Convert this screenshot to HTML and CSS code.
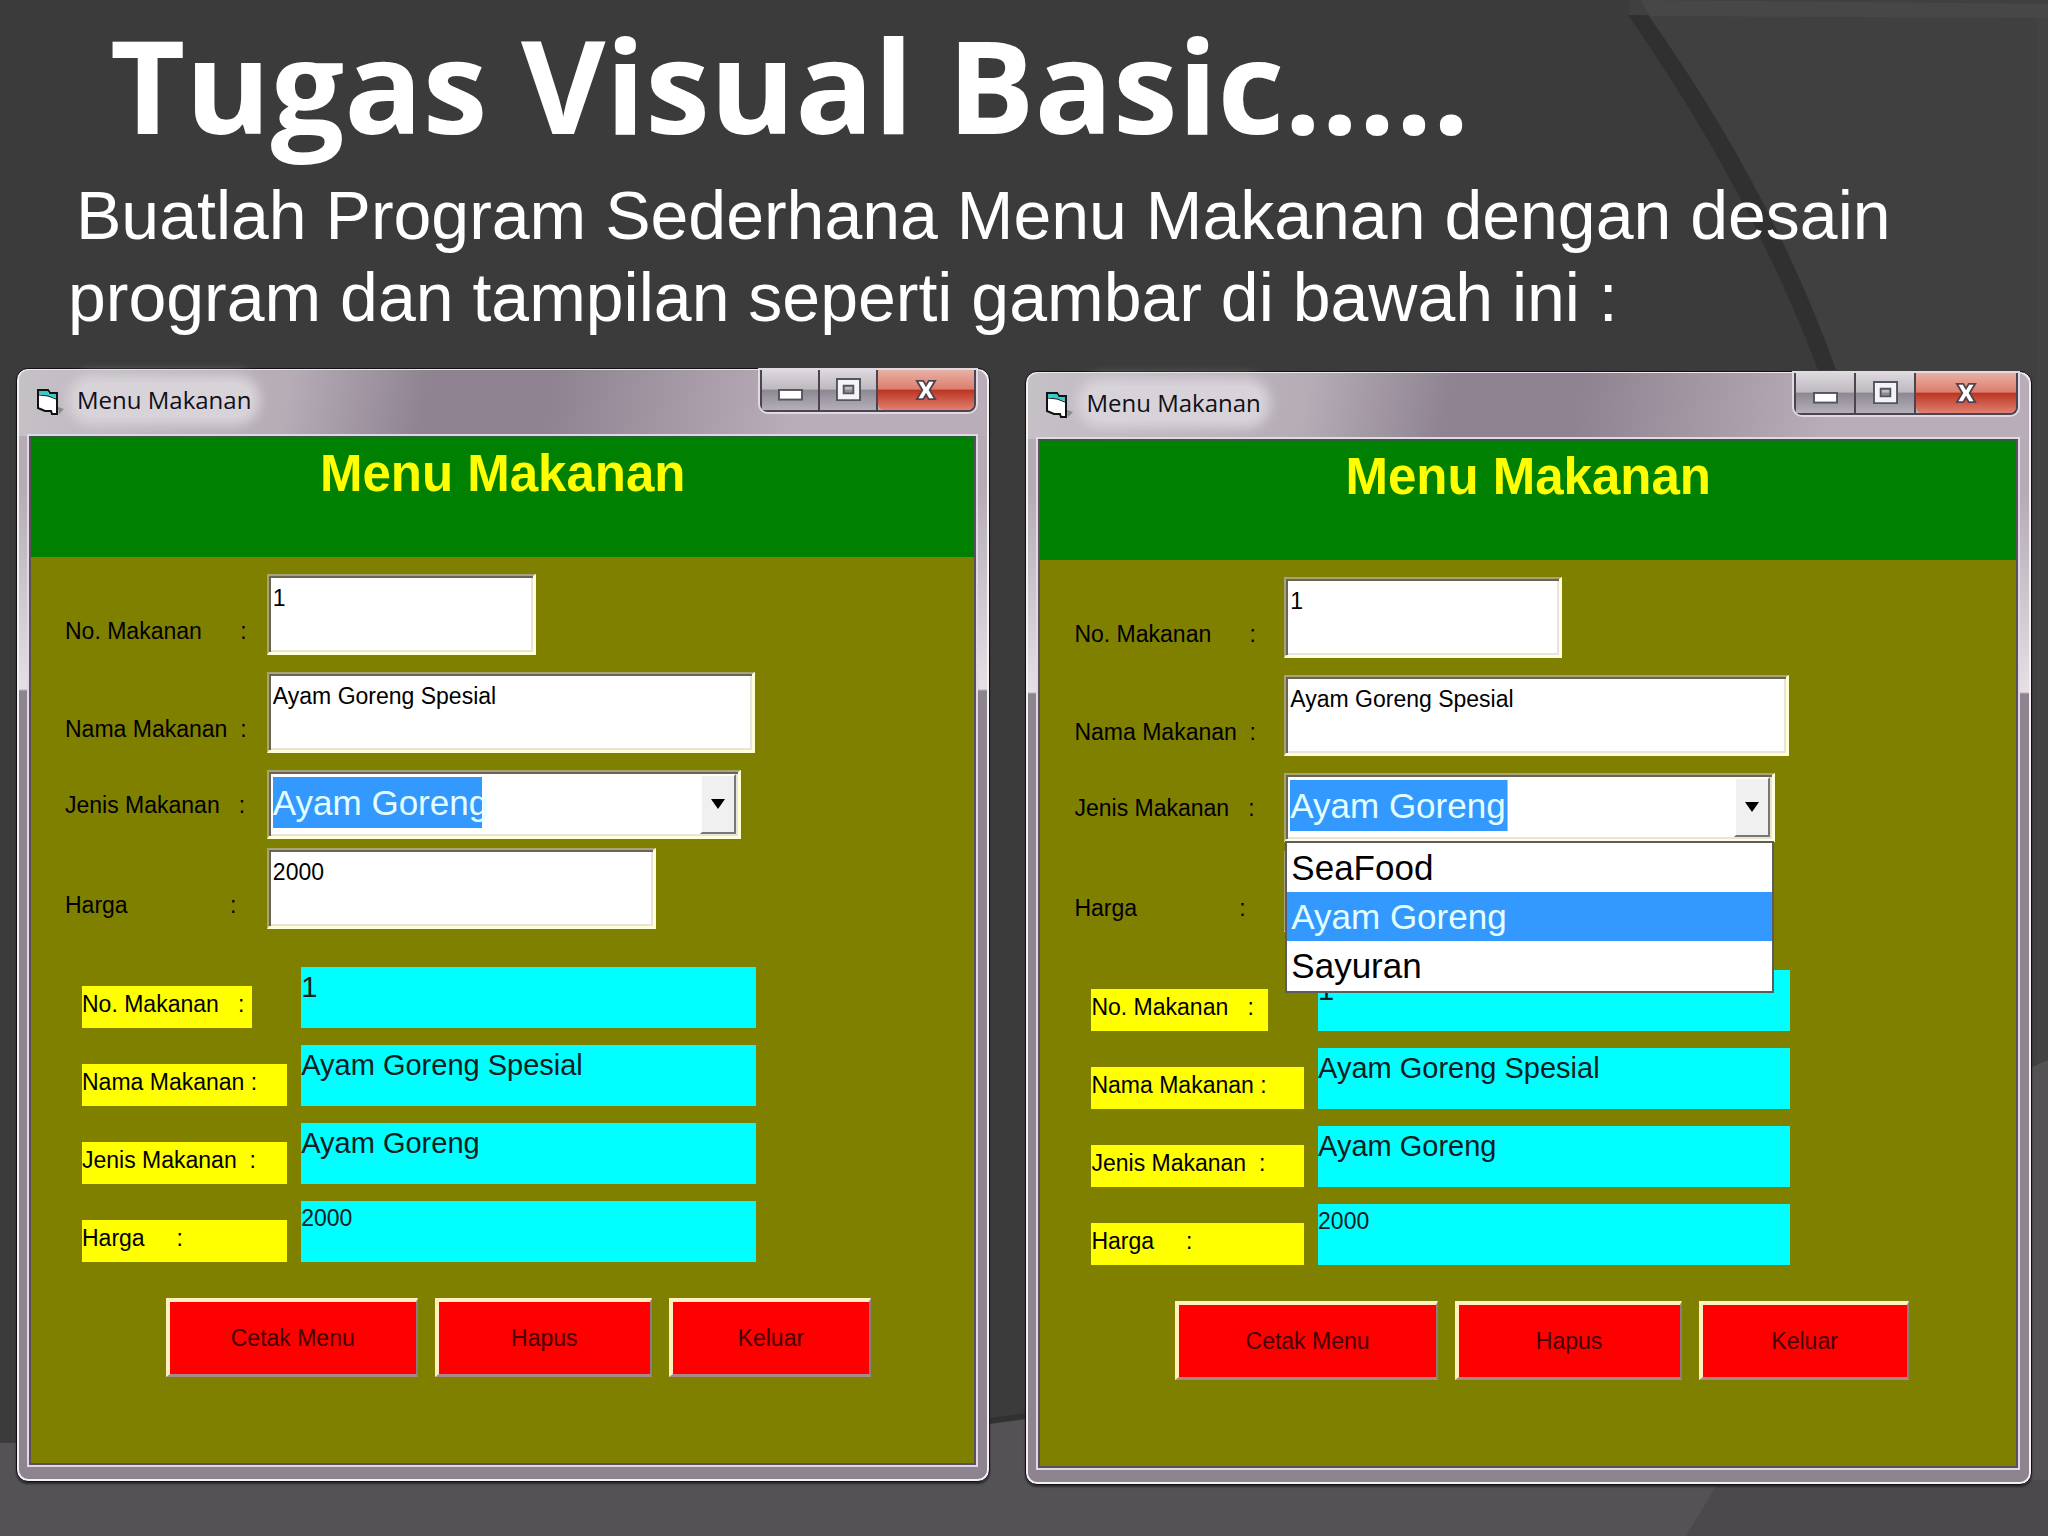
FILE: index.html
```
<!DOCTYPE html>
<html lang="id">
<head>
<meta charset="UTF-8">
<title>Tugas Visual Basic</title>
<link rel="stylesheet" href="styles.css">
</head>
<body>

<svg class="backdrop" viewBox="0 0 2048 1536" preserveAspectRatio="none" aria-hidden="true">
  <path d="M1628 15 Q1750 190 1826 370 L1990 1536 L2048 1536 L2048 0 L1630 0 Z" fill="#404040"/>
  <path d="M1640 0 L2048 4 L2048 18 L1650 16 Z" fill="#474747"/>
  <path d="M2037 18 L2048 18 L2048 1070 L2037 1085 Z" fill="#434343"/>
  <path d="M1628 15 L1648 15 Q1772 190 1836 370 L1818 370 Q1750 190 1628 15 Z" fill="#303030"/>
  <path d="M0 1443 L16 1443 L992 1423 Q1500 1300 2048 1060 L2048 1536 L0 1536 Z" fill="#545254"/>
  <path d="M990 1418 L1026 1413 L1026 1419 L990 1424 Z" fill="#323132"/>
  <path d="M1720 1480 L2048 1480 L2048 1536 L1686 1536 Z" fill="#4b494b"/>
</svg>

<main class="slide">
  <h1>Tugas Visual Basic.....</h1>
  <p class="lead">Buatlah Program Sederhana Menu Makanan dengan desain program dan tampilan seperti gambar di bawah ini :</p>

  <div class="windows">

    <!-- form window, list closed -->
    <section class="window w1">
      <header class="titlebar">
        <svg class="app-icon" viewBox="0 0 28 28" aria-hidden="true">
          <path d="M22 19 L28 21 L23 26 Z" fill="#888"/>
          <path d="M2 2 L12 2 L14 5 L21 5 L21 26 L16 26 L15 23 L9 23 L2 20 Z" fill="#fff" stroke="#111" stroke-width="2"/>
          <path d="M3 3 L12 3 L13 6 L20 6 L20 10 L12 8 L3 6 Z" fill="#3cc"/>
          <path d="M3 7 L12 8 L20 11" fill="none" stroke="#111" stroke-width="1"/>
        </svg>
        <span class="caption">Menu Makanan</span>
        <div class="controls">
          <button type="button" class="ctl min" aria-label="Minimize"><svg viewBox="0 0 26 12"><rect x="1" y="1" width="24" height="10" fill="#fff" stroke="#55555f" stroke-width="2"/></svg></button>
          <button type="button" class="ctl max" aria-label="Maximize"><svg viewBox="0 0 26 24"><path d="M1 1H25V23H1Z M8 8V16H18V8Z" fill="#f4f4f6" fill-rule="evenodd" stroke="#55555f" stroke-width="2"/></svg></button>
          <button type="button" class="ctl close" aria-label="Close"><svg viewBox="0 0 24 24"><path d="M2 2H9L12 7L15 2H22L16 12L22 22H15L12 17L9 22H2L8 12Z" fill="#fff" stroke="#54434c" stroke-width="2"/></svg></button>
        </div>
      </header>
      <form class="client">
        <h2>Menu Makanan</h2>
        <div class="row">
          <label for="no1">No. Makanan      :</label>
          <input id="no1" class="field short" type="text" value="1">
        </div>
        <div class="row">
          <label for="nama1">Nama Makanan  :</label>
          <input id="nama1" class="field long" type="text" value="Ayam Goreng Spesial">
        </div>
        <div class="row middle">
          <label for="jenis1">Jenis Makanan   :</label>
          <div class="combo">
            <select id="jenis1">
              <option>SeaFood</option>
              <option selected>Ayam Goreng</option>
              <option>Sayuran</option>
            </select>
            <button type="button" class="drop" aria-label="Buka daftar"><svg viewBox="0 0 14 10"><path d="M0 0H14L7 10Z"/></svg></button>
          </div>
        </div>
        <div class="row tight">
          <label for="harga1">Harga                :</label>
          <input id="harga1" class="field medium" type="text" value="2000">
        </div>

        <div class="result first">
          <span class="tag small">No. Makanan   :</span>
          <output class="value">1</output>
        </div>
        <div class="result">
          <span class="tag">Nama Makanan :</span>
          <output class="value">Ayam Goreng Spesial</output>
        </div>
        <div class="result">
          <span class="tag">Jenis Makanan  :</span>
          <output class="value">Ayam Goreng</output>
        </div>
        <div class="result">
          <span class="tag">Harga     :</span>
          <output class="value price">2000</output>
        </div>

        <div class="actions">
          <button type="button">Cetak Menu</button>
          <button type="button">Hapus</button>
          <button type="button">Keluar</button>
        </div>
      </form>
    </section>

    <!-- same form, list open -->
    <section class="window w2">
      <header class="titlebar">
        <svg class="app-icon" viewBox="0 0 28 28" aria-hidden="true">
          <path d="M22 19 L28 21 L23 26 Z" fill="#888"/>
          <path d="M2 2 L12 2 L14 5 L21 5 L21 26 L16 26 L15 23 L9 23 L2 20 Z" fill="#fff" stroke="#111" stroke-width="2"/>
          <path d="M3 3 L12 3 L13 6 L20 6 L20 10 L12 8 L3 6 Z" fill="#3cc"/>
          <path d="M3 7 L12 8 L20 11" fill="none" stroke="#111" stroke-width="1"/>
        </svg>
        <span class="caption">Menu Makanan</span>
        <div class="controls">
          <button type="button" class="ctl min" aria-label="Minimize"><svg viewBox="0 0 26 12"><rect x="1" y="1" width="24" height="10" fill="#fff" stroke="#55555f" stroke-width="2"/></svg></button>
          <button type="button" class="ctl max" aria-label="Maximize"><svg viewBox="0 0 26 24"><path d="M1 1H25V23H1Z M8 8V16H18V8Z" fill="#f4f4f6" fill-rule="evenodd" stroke="#55555f" stroke-width="2"/></svg></button>
          <button type="button" class="ctl close" aria-label="Close"><svg viewBox="0 0 24 24"><path d="M2 2H9L12 7L15 2H22L16 12L22 22H15L12 17L9 22H2L8 12Z" fill="#fff" stroke="#54434c" stroke-width="2"/></svg></button>
        </div>
      </header>
      <form class="client">
        <h2>Menu Makanan</h2>
        <div class="row">
          <label for="no2">No. Makanan      :</label>
          <input id="no2" class="field short" type="text" value="1">
        </div>
        <div class="row">
          <label for="nama2">Nama Makanan  :</label>
          <input id="nama2" class="field long" type="text" value="Ayam Goreng Spesial">
        </div>
        <div class="row middle">
          <label for="jenis2">Jenis Makanan   :</label>
          <div class="combo">
            <select id="jenis2">
              <option>SeaFood</option>
              <option selected>Ayam Goreng</option>
              <option>Sayuran</option>
            </select>
            <button type="button" class="drop" aria-label="Tutup daftar"><svg viewBox="0 0 14 10"><path d="M0 0H14L7 10Z"/></svg></button>
            <select class="list" size="3" aria-label="Jenis Makanan">
              <option>SeaFood</option>
              <option class="current">Ayam Goreng</option>
              <option>Sayuran</option>
            </select>
          </div>
        </div>
        <div class="row tight">
          <label for="harga2">Harga                :</label>
          <input id="harga2" class="field medium" type="text">
        </div>

        <div class="result first">
          <span class="tag small">No. Makanan   :</span>
          <output class="value">1</output>
        </div>
        <div class="result">
          <span class="tag">Nama Makanan :</span>
          <output class="value">Ayam Goreng Spesial</output>
        </div>
        <div class="result">
          <span class="tag">Jenis Makanan  :</span>
          <output class="value">Ayam Goreng</output>
        </div>
        <div class="result">
          <span class="tag">Harga     :</span>
          <output class="value price">2000</output>
        </div>

        <div class="actions">
          <button type="button">Cetak Menu</button>
          <button type="button">Hapus</button>
          <button type="button">Keluar</button>
        </div>
      </form>
    </section>

  </div>
</main>

</body>
</html>
```
FILE: styles.css
```
* {
  box-sizing: border-box;
}
body {
  margin: 0;
  min-height: 100vh;
  background-color: #3b3b3b;
  color: #fff;
  font-family: "Liberation Sans", Arial, sans-serif;
}
.backdrop {
  position: absolute;
  z-index: -1;
  left: 0;
  top: 0;
  width: 100%;
  height: 100%;
}
.slide {
  padding: 0 16px;
}
h1 {
  margin: 0;
  padding: 12px 0 0 94px;
  font-family: "Open Sans", "Noto Sans", sans-serif;
  font-size: 130px;
  line-height: 144px;
  font-weight: 700;
}
.lead {
  margin: 0;
  padding: 18px 60px 0 52px;
  font-size: 68px;
  line-height: 82px;
  text-indent: 8px;
}
.windows {
  display: flex;
  align-items: flex-start;
  gap: 35px;
  padding-top: 30px;
}

/* window frame */
.window {
  min-width: 0;
  padding: 0 13px 16px 12px;
  border: 1px solid #111;
  border-radius: 12px;
  background: linear-gradient(#b5abb5, #b5abb5 120px, #e4e0e4 320px, #8e8490 322px);
  box-shadow: inset 0 0 0 2px #f4f0f4, 0 2px 2px #2a2a2e;
}
.w1 {
  flex: 973 1 0;
}
.w2 {
  flex: 1006 1 0;
  margin-top: 3px;
}
.titlebar {
  display: flex;
  align-items: flex-start;
  height: 67px;
  margin: 0 -10px;
  padding: 0 10px 0 17px;
  border-radius: 10px 10px 0 0;
  background: linear-gradient(100deg, #c6c0c7 0%, #b5acb6 28%, #8f8391 42%, #8f8391 55%, #b8adb8 80%, #b8adb8 100%);
  border-top: 1px solid #ece8ec;
}
.app-icon {
  width: 28px;
  height: 28px;
  margin-top: 18px;
}
.caption {
  margin: 13px 0 0 12px;
  padding: 0 1px;
  color: #101018;
  font-family: "Open Sans", "Noto Sans", sans-serif;
  font-size: 24px;
  line-height: 34px;
  border-radius: 16px;
  background-color: #d8d3d9;
  box-shadow: 0 0 12px 8px #d8d3d9;
}
.controls {
  display: flex;
  width: 23%;
  height: 42px;
  margin-left: auto;
  border: 2px solid #4c4450;
  border-top: 0;
  border-radius: 0 0 8px 8px;
  box-shadow: 0 0 0 2px #e0dae2;
}
.ctl {
  display: flex;
  flex: 57 1 0;
  align-items: center;
  justify-content: center;
  padding: 0;
  border: 0;
  border-right: 2px solid #4c4450;
  background: linear-gradient(#dcd8dd, #bdb9bf 48%, #8c8890 50%, #b4afb8);
}
.ctl svg {
  width: 25px;
}
.ctl.min svg {
  margin-top: 10px;
}
.ctl.close {
  flex: 98 1 0;
  border-right: 0;
  border-radius: 0 0 6px 6px;
  background: linear-gradient(#e8b0a4, #dc7e6e 48%, #bc3420 50%, #e08070);
}
.ctl.close svg {
  width: 22px;
}

/* form */
.client {
  display: block;
  padding-bottom: 86px;
  border: 2px solid #5a5060;
  border-top-color: #2c6038;
  background-color: #808000;
  box-shadow: 0 0 0 2px #e0d8e2;
  color: #000;
  font-family: "Liberation Sans", Arial, sans-serif;
  font-size: 23px;
  line-height: 32px;
}
h2 {
  height: 119px;
  margin: 0;
  padding-top: 6px;
  background-color: #008000;
  color: #ff0;
  font-size: 51px;
  line-height: 60px;
  font-weight: bold;
  text-align: center;
}
.row {
  display: grid;
  grid-template-columns: 25% 75%;
  align-items: end;
  margin-top: 17px;
}
.row label {
  padding: 0 0 8px 34px;
  white-space: pre;
}
.row.middle {
  align-items: center;
}
.row.middle label {
  padding-bottom: 0;
}
.row.tight {
  margin-top: 9px;
}
.field,
.combo {
  border: 2px solid #a8a478;
  border-right: 3px solid #ffffd8;
  border-bottom: 3px solid #ffffd8;
  background-color: #fff;
  box-shadow: inset 2px 2px #6a6450, inset -2px -2px #e8e4dc;
}
.field {
  width: 100%;
  height: 81px;
  padding: 0 4px 32px;
  border-radius: 0;
  color: #000;
  font: inherit;
}
.short {
  width: 38%;
}
.long {
  width: 69%;
}
.medium {
  width: 55%;
}
.combo {
  position: relative;
  display: flex;
  width: 67%;
  height: 69px;
  padding: 2px;
}
.combo select {
  border: 0;
  border-radius: 0;
  font-family: "Liberation Sans", Arial, sans-serif;
  font-size: 35px;
}
.combo > select:first-child {
  flex: 1;
  min-width: 0;
  margin: 3px 0 6px 2px;
  padding: 0;
  appearance: none;
  background: linear-gradient(#39f, #39f) no-repeat 0 0 / 49% 100%;
  color: #e4ffff;
}
.drop {
  width: 36px;
  padding: 0;
  border: 2px solid;
  border-color: #fff #777 #777 #fff;
  background-color: #f0f0f0;
}
.drop svg {
  width: 14px;
}
.combo .list {
  position: absolute;
  z-index: 2;
  left: -1px;
  right: -2px;
  top: 66px;
  height: 152px;
  padding: 0;
  border: 2px solid #5c5c60;
  background-color: #fff;
  color: #000;
  overflow: hidden;
}
.list option {
  height: 49px;
  padding: 5px 4px 0;
}
.list .current {
  background-color: #39f;
  color: #e4ffff;
}

/* yellow and cyan readout */
.result {
  display: grid;
  grid-template-columns: 23% 51%;
  column-gap: 14px;
  align-items: end;
  margin-top: 17px;
  padding-left: 51px;
}
.result.first {
  margin-top: 38px;
}
.tag {
  height: 42px;
  padding-top: 2px;
  background-color: #ff0;
  white-space: pre;
}
.tag.small {
  width: 83%;
}
.value {
  height: 61px;
  padding-top: 4px;
  background-color: #0ff;
  color: #102020;
  font-size: 29px;
}
.value.price {
  padding-top: 1px;
  font-size: 23px;
}

.actions {
  display: grid;
  grid-template-columns: 252fr 218fr 202fr;
  gap: 17px;
  margin: 36px 11% 0 135px;
}
.actions button {
  height: 79px;
  padding: 0;
  border: 4px solid #fff0c0;
  border-right: 2px solid #8c7c80;
  border-bottom: 3px solid #a88;
  border-radius: 0;
  background-color: #f00;
  color: #400;
  font: inherit;
}
```
